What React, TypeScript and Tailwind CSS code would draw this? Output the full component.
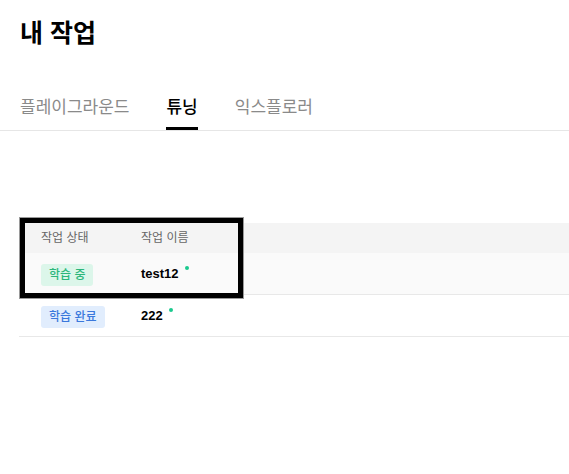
const tabs = [
  { label: '플레이그라운드', active: false },
  { label: '튜닝', active: true },
  { label: '익스플로러', active: false },
]

const jobs = [
  { id: 1, status: 'running', name: 'test12' },
  { id: 2, status: 'done', name: '222' },
]

function StatusBadge({ status }: { status: string }) {
  if (status === 'running') {
    return (
      <span className="inline-flex h-[22px] items-center rounded-[3px] bg-[#dcf6ea] px-[8px] text-[12px] font-medium text-[#2cb67a]">
        학습 중
      </span>
    )
  }
  return (
    <span className="inline-flex h-[22px] items-center rounded-[3px] bg-[#e1edfd] px-[8px] text-[12px] font-medium text-[#3a78dc]">
      학습 완료
    </span>
  )
}

export default function App() {
  return (
    <div className="relative min-h-screen bg-white font-['Liberation_Sans','Noto_Sans_CJK_KR',sans-serif] text-black">
      <h1 className="px-5 pt-[16px] text-[25px] leading-[34px] font-bold">내 작업</h1>

      <div className="mt-[47px] flex gap-[37px] border-b border-[#e6e6e6] pl-5">
        {tabs.map((tab) => (
          <div
            key={tab.label}
            className={`border-b-[3px] pb-[8px] text-[17px] leading-[22px] ${
              tab.active ? 'border-black font-medium text-black' : 'border-transparent text-[#8a8a8a]'
            }`}
          >
            {tab.label}
          </div>
        ))}
      </div>

      <div className="mt-[92px] pl-[19px]">
        <div className="flex h-[30px] items-center bg-[#f4f4f4] pl-[22px] text-[12px] text-[#666]">
          <div className="w-[100px]">작업 상태</div>
          <div>작업 이름</div>
        </div>
        {jobs.map((job, i) => (
          <div
            key={job.id}
            className={`flex h-[42px] items-center border-b border-[#e8e8e8] pl-[22px] ${
              i === 0 ? 'bg-[#fafafa]' : 'bg-white'
            }`}
          >
            <div className="w-[100px]">
              <StatusBadge status={job.status} />
            </div>
            <div className="relative text-[13px] leading-[18px] font-bold">
              {job.name}
              <span className="absolute -right-[10px] top-[1px] h-[4px] w-[4px] rounded-full bg-[#1bc98e]" />
            </div>
          </div>
        ))}
      </div>

      {/* highlight frame */}
      <div className="pointer-events-none absolute left-[20px] top-[218px] h-[80px] w-[223px] border-[5px] border-black shadow-[0_0_0_1px_#9a9a9a]" />
    </div>
  )
}
